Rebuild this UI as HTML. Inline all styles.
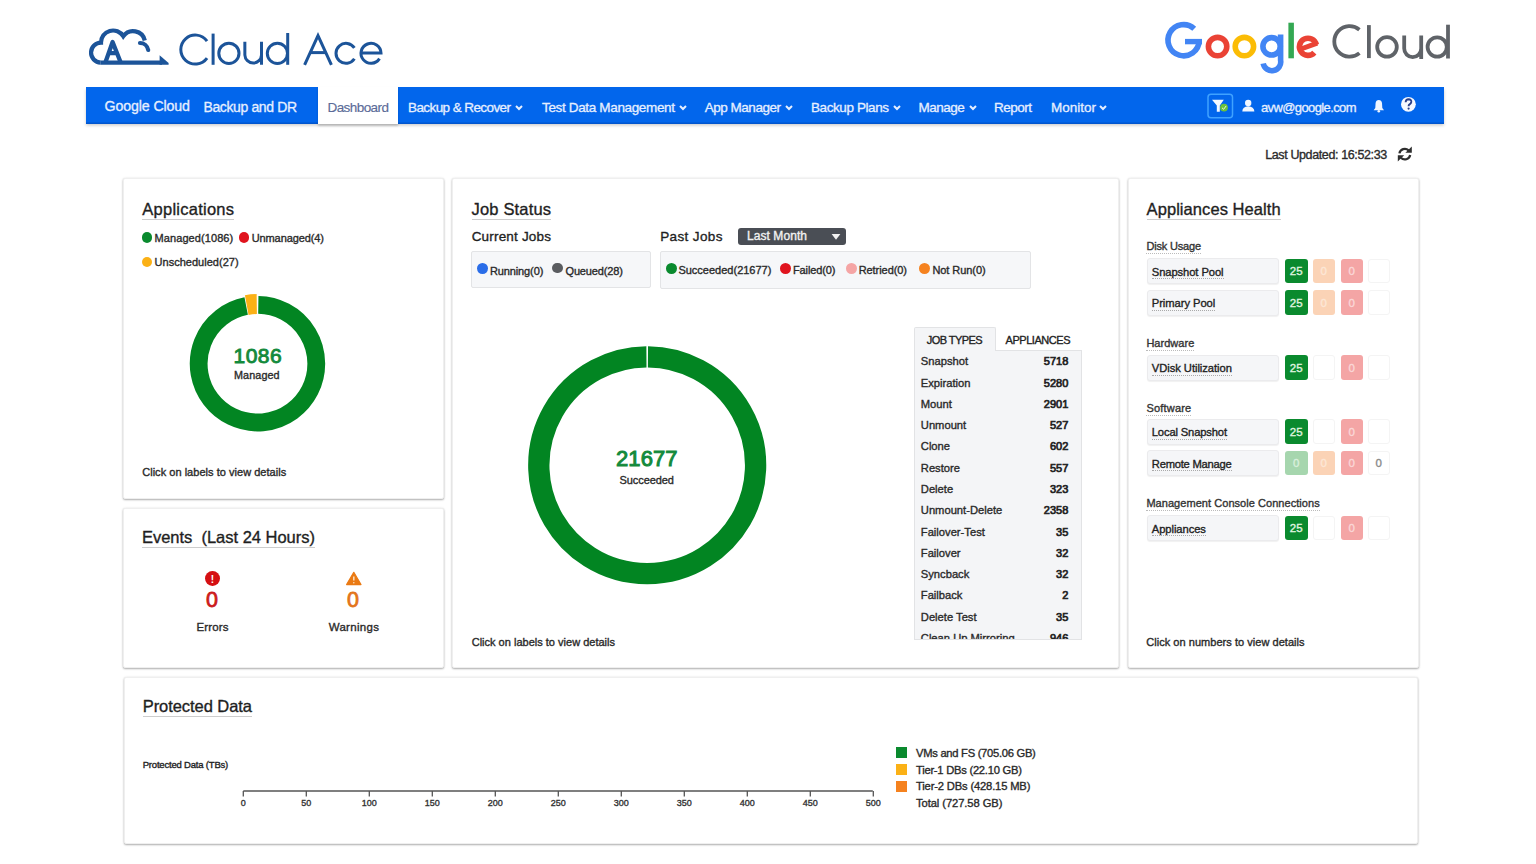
<!DOCTYPE html><html><head><meta charset="utf-8"><style>
html,body{margin:0;padding:0;background:#fff;width:1536px;height:864px;overflow:hidden;position:relative;font-family:"Liberation Sans",sans-serif}
.t{position:absolute;white-space:pre;line-height:1}
.r{position:absolute}
.a{position:absolute}
</style></head><body>
<svg class="a" style="left:0;top:0" width="1536" height="130" viewBox="0 0 1536 130">
<g fill="none" stroke="#1c5499" stroke-width="4.2">
<path d="M100.6 62.6 A10 10 0 0 1 101.00 42.61 A12 12 0 0 1 123.25 36.26 A12 12 0 0 1 144.8 40.5"/>
<path d="M140 43 A8.3 8.3 0 0 1 148.2 50" stroke-linecap="round"/>
<path d="M100.5 62.6 L162 62.6"/>
<path d="M105.2 63 L112.6 42 L120.9 63 M107.8 53.2 L118 53.2" stroke-linejoin="round" stroke-width="4.3"/>
</g>
<path d="M159.6 55.2 L168.6 63 L168.6 64.8 L159.6 64.8 Z" fill="#1c5499"/>
</svg>
<svg class="a" style="left:0;top:0" width="400" height="80"><g fill="none" stroke="#1c5499" stroke-width="3">
<path d="M207.03 41.03 A14.5 14.5 0 1 0 207.03 58.07"/>
<path d="M213.1 33.6 L213.1 64.8"/>
<circle cx="228.9" cy="53.3" r="10.1"/>
<path d="M244.85 41.8 L244.85 55 A8.33 8.33 0 0 0 261.5 55 M261.5 41.8 L261.5 64.8"/>
<circle cx="277.4" cy="53.35" r="10.1"/>
<path d="M287.7 33 L287.7 64.8"/>
<path d="M304.6 64.8 L318 35.6 L331.4 64.8" stroke-linejoin="miter"/>
<path d="M310.8 52.6 L325.2 52.6"/>
<path d="M354.39 47.90 A10 10 0 1 0 354.39 58.80"/>
<path d="M361 53 L381 53 A10 10 0 1 0 379.48 58.65"/>
</g></svg>
<svg class="a" style="left:0;top:0" width="1536" height="90">
<g fill="none" stroke-width="5.6">
<path d="M1194.24 28.79 A15.6 15.6 0 1 0 1199.18 41.02" stroke="#4285f4"/>
<circle cx="1217.6" cy="46.6" r="9.2" stroke="#ea4335"/>
<circle cx="1244.4" cy="46.6" r="9.2" stroke="#fbbc05"/>
<circle cx="1271.6" cy="46.3" r="8.7" stroke="#4285f4"/>
<path d="M1280.6 34.4 L1280.6 60.2 A8.7 8.7 0 0 1 1263.2 63.5" stroke="#4285f4"/>
<path d="M1299.6 49.5 L1317.2 43.2" stroke="#ea4335" stroke-width="5"/>
<path d="M1316.30 44.73 A8.55 8.55 0 1 0 1314.35 52.52" stroke="#ea4335"/>
</g>
<rect x="1185" y="38.9" width="17" height="5.4" fill="#4285f4"/>
<rect x="1288.4" y="22.7" width="5.5" height="35.6" fill="#34a853"/>
<g fill="none" stroke="#5f6368" stroke-width="3.8">
<path d="M1359.43 29.68 A15.3 15.3 0 1 0 1359.43 53.12"/>
<circle cx="1387" cy="46.9" r="9.8"/>
<path d="M1404.2 35.6 L1404.2 48.6 A8.5 8.5 0 0 0 1421.2 48.6 M1421.2 35.6 L1421.2 59"/>
<circle cx="1437.2" cy="47" r="9.6"/>
<path d="M1448 24.7 L1448 58.5"/>
</g>
<rect x="1367" y="25.1" width="3.8" height="33" fill="#5f6368"/>
</svg>
<div class="r" style="left:86px;top:86.5px;width:1358px;height:37.5px;background:#0266ec;box-shadow:0 1.5px 3px rgba(0,0,0,.2),inset 0 -1.5px 0 rgba(0,40,120,.25)"></div>
<div class="r" style="left:317.5px;top:86.5px;width:80.5px;height:37.5px;background:#fff;box-shadow:0 1.5px 2px rgba(0,0,0,.16)"></div>
<div class="t" style="left:104.60px;top:99px;font-size:14.2px;color:#e6efff;letter-spacing:-0.122px;-webkit-text-stroke:0.3px #e6efff;">Google Cloud</div>
<div class="t" style="left:203.50px;top:100px;font-size:14px;color:#e6efff;letter-spacing:-0.380px;-webkit-text-stroke:0.3px #e6efff;">Backup and DR</div>
<div class="t" style="left:327.50px;top:101px;font-size:13.5px;color:#5b6b98;letter-spacing:-0.568px;-webkit-text-stroke:0.15px #5b6b98;">Dashboard</div>
<div class="t" style="left:408.00px;top:101px;font-size:13.5px;color:#e6efff;letter-spacing:-0.587px;-webkit-text-stroke:0.3px #e6efff;">Backup &amp; Recover</div>
<div class="t" style="left:542.00px;top:101px;font-size:13.5px;color:#e6efff;letter-spacing:-0.346px;-webkit-text-stroke:0.3px #e6efff;">Test Data Management</div>
<div class="t" style="left:704.70px;top:101px;font-size:13.5px;color:#e6efff;letter-spacing:-0.475px;-webkit-text-stroke:0.3px #e6efff;">App Manager</div>
<div class="t" style="left:811.00px;top:101px;font-size:13.5px;color:#e6efff;letter-spacing:-0.414px;-webkit-text-stroke:0.3px #e6efff;">Backup Plans</div>
<div class="t" style="left:918.60px;top:101px;font-size:13.5px;color:#e6efff;letter-spacing:-0.537px;-webkit-text-stroke:0.3px #e6efff;">Manage</div>
<div class="t" style="left:994.00px;top:101px;font-size:13.5px;color:#e6efff;letter-spacing:-0.504px;-webkit-text-stroke:0.3px #e6efff;">Report</div>
<div class="t" style="left:1051.00px;top:101px;font-size:13.5px;color:#e6efff;letter-spacing:-0.003px;-webkit-text-stroke:0.3px #e6efff;">Monitor</div>
<svg class="a" style="left:0;top:0" width="1536" height="130"><g fill="none" stroke="#e6efff" stroke-width="2"><path d="M516 106 L519 109 L522 106"/><path d="M680 106 L683 109 L686 106"/><path d="M786 106 L789 109 L792 106"/><path d="M894 106 L897 109 L900 106"/><path d="M970 106 L973 109 L976 106"/><path d="M1100 106 L1103 109 L1106 106"/></g></svg>
<svg class="a" style="left:0;top:0" width="1536" height="130">
<rect x="1208" y="94.3" width="24.5" height="23.5" rx="3" fill="none" stroke="#3fa2ff" stroke-width="1.5"/>
<path d="M1212 99.8 L1223.8 99.8 L1219.8 105.5 L1219.8 111.8 L1216.8 111.8 L1216.8 105.5 Z" fill="#f4f8ff"/>
<circle cx="1224" cy="107.6" r="3.9" fill="#6cc23a"/><path d="M1222 107.8 L1223.6 109.3 L1226.2 105.9" fill="none" stroke="#e8f8e0" stroke-width="1"/>
<circle cx="1248.2" cy="103" r="3.2" fill="#f0f6ff"/>
<path d="M1242.3 111.6 Q1242.5 106.5 1248.2 106.3 Q1254 106.5 1254.4 111.6 Z" fill="#f0f6ff"/>
<path d="M1373.6 110.3 L1384 110.3 L1382.3 108 L1382 103 Q1381.5 99.9 1378.8 99.9 Q1376 99.9 1375.6 103 L1375.3 108 Z" fill="#f0f6ff"/>
<circle cx="1378.8" cy="111.3" r="1.3" fill="#f0f6ff"/>
<circle cx="1408.4" cy="104.3" r="7.4" fill="#f5f9ff"/>
<path d="M1405.6 102.3 Q1405.8 99.3 1408.6 99.3 Q1411.4 99.4 1411.3 101.9 Q1411.2 103.4 1409.6 104.3 Q1408.6 104.9 1408.6 106.2" fill="none" stroke="#2a3f8a" stroke-width="1.9"/>
<circle cx="1408.6" cy="108.6" r="1.1" fill="#2a3f8a"/>
</svg>
<div class="t" style="left:1261.00px;top:101px;font-size:13px;color:#e6efff;letter-spacing:-0.617px;-webkit-text-stroke:0.3px #e6efff;">avw@google.com</div>
<div class="t" style="left:1265.20px;top:149px;font-size:12.5px;color:#2b2b2b;letter-spacing:-0.379px;-webkit-text-stroke:0.35px #2b2b2b;">Last Updated: 16:52:33</div>
<svg class="a" style="left:1390px;top:140px" width="30" height="30" viewBox="1390 140 30 30">
<g fill="none" stroke="#2e2e2e" stroke-width="2.2">
<path d="M1399.4 153.4 A5.5 5.5 0 0 1 1408.6 150.4"/><path d="M1410.2 155 A5.5 5.5 0 0 1 1400.9 157.8"/>
</g>
<path d="M1405.4 152.8 L1411.8 152.8 L1411.8 146.4 Z" fill="#2e2e2e"/>
<path d="M1404.2 155.3 L1397.8 155.3 L1397.8 161.6 Z" fill="#2e2e2e"/>
</svg>
<div class="r" style="left:122.5px;top:178px;width:321.5px;height:320.5px;background:#fff;border:1px solid #efefef;box-sizing:border-box;box-shadow:0 0 3px rgba(0,0,0,.07),0 1px 2px rgba(0,0,0,.3);border-radius:2px"></div>
<div class="r" style="left:123px;top:507.5px;width:320.5px;height:160.0px;background:#fff;border:1px solid #efefef;box-sizing:border-box;box-shadow:0 0 3px rgba(0,0,0,.07),0 1px 2px rgba(0,0,0,.3);border-radius:2px"></div>
<div class="r" style="left:452px;top:178px;width:666.5px;height:489.5px;background:#fff;border:1px solid #efefef;box-sizing:border-box;box-shadow:0 0 3px rgba(0,0,0,.07),0 1px 2px rgba(0,0,0,.3);border-radius:2px"></div>
<div class="r" style="left:1128px;top:178px;width:290.5px;height:489.5px;background:#fff;border:1px solid #efefef;box-sizing:border-box;box-shadow:0 0 3px rgba(0,0,0,.07),0 1px 2px rgba(0,0,0,.3);border-radius:2px"></div>
<div class="r" style="left:124px;top:677px;width:1294px;height:167px;background:#fff;border:1px solid #efefef;box-sizing:border-box;box-shadow:0 0 3px rgba(0,0,0,.07),0 1px 2px rgba(0,0,0,.3);border-radius:2px"></div>
<div class="t" style="left:142.30px;top:201px;font-size:16.5px;color:#1f1f1f;letter-spacing:0.248px;-webkit-text-stroke:0.35px #1f1f1f;">Applications</div>
<div class="r" style="left:142.3px;top:219px;width:91.69999999999999px;height:1px;background:#cdcdcd"></div>
<div class="r" style="left:142.10000000000002px;top:232.20000000000002px;width:10.4px;height:10.4px;border-radius:50%;background:#0a8a2e"></div>
<div class="t" style="left:154.60px;top:233px;font-size:11px;color:#2a2a2a;letter-spacing:0.078px;-webkit-text-stroke:0.35px #2a2a2a;">Managed(1086)</div>
<div class="r" style="left:238.60000000000002px;top:232.4px;width:10.4px;height:10.4px;border-radius:50%;background:#e0141e"></div>
<div class="t" style="left:251.70px;top:233px;font-size:11px;color:#2a2a2a;letter-spacing:-0.098px;-webkit-text-stroke:0.35px #2a2a2a;">Unmanaged(4)</div>
<div class="r" style="left:141.9px;top:256.8px;width:10.4px;height:10.4px;border-radius:50%;background:#fbb116"></div>
<div class="t" style="left:154.60px;top:257px;font-size:11px;color:#2a2a2a;letter-spacing:0.016px;-webkit-text-stroke:0.35px #2a2a2a;">Unscheduled(27)</div>
<svg class="a" style="left:0;top:0" width="1536" height="864"><path d="M258.32 304.91 A58.8 58.8 0 1 1 246.18 306.00" fill="none" stroke="#028522" stroke-width="17.8"/><path d="M246.74 305.08 A59.6 59.6 0 0 1 256.77 304.10" fill="none" stroke="#fbb116" stroke-width="20"/></svg>
<div class="t" style="left:233.60px;top:345px;font-size:21px;color:#138a3c;letter-spacing:0.428px;-webkit-text-stroke:0.9px #138a3c;">1086</div>
<div class="t" style="left:234.00px;top:370px;font-size:10.8px;color:#2a2a2a;letter-spacing:0.094px;-webkit-text-stroke:0.35px #2a2a2a;">Managed</div>
<div class="t" style="left:142.20px;top:467px;font-size:11px;color:#2a2a2a;letter-spacing:0.031px;-webkit-text-stroke:0.35px #2a2a2a;">Click on labels to view details</div>
<div class="t" style="left:141.90px;top:529px;font-size:16.5px;color:#1f1f1f;letter-spacing:-0.010px;-webkit-text-stroke:0.35px #1f1f1f;">Events  (Last 24 Hours)</div>
<div class="r" style="left:141.9px;top:547px;width:173.1px;height:1px;background:#cdcdcd"></div>
<div class="r" style="left:205.1px;top:571.2px;width:14.8px;height:14.8px;border-radius:50%;background:#d50f12"></div>
<div class="t" style="left:210.83px;top:575px;font-size:10px;color:#fff;font-weight:bold;">!</div>
<div class="t" style="left:205.92px;top:590px;font-size:21.5px;color:#cc1a1a;-webkit-text-stroke:0.8px #cc1a1a;">0</div>
<div class="t" style="left:196.50px;top:622px;font-size:11.5px;color:#2a2a2a;letter-spacing:0.139px;-webkit-text-stroke:0.35px #2a2a2a;">Errors</div>
<svg class="a" style="left:0;top:0" width="1536" height="864"><path d="M353.8 572.3 L361 584.6 L346.6 584.6 Z" fill="#ea7a14" stroke="#ea7a14" stroke-width="1.2" stroke-linejoin="round"/><path d="M353.8 576.5 L353.8 580.6" stroke="#fbe0c0" stroke-width="1.5"/><circle cx="353.8" cy="582.7" r="0.8" fill="#fbe0c0"/></svg>
<div class="t" style="left:347.12px;top:590px;font-size:21.5px;color:#e3741a;-webkit-text-stroke:0.8px #e3741a;">0</div>
<div class="t" style="left:328.70px;top:622px;font-size:11.5px;color:#2a2a2a;letter-spacing:0.294px;-webkit-text-stroke:0.35px #2a2a2a;">Warnings</div>
<div class="t" style="left:471.50px;top:201px;font-size:16.5px;color:#1f1f1f;letter-spacing:0.182px;-webkit-text-stroke:0.35px #1f1f1f;">Job Status</div>
<div class="r" style="left:471.5px;top:219px;width:79.60000000000002px;height:1px;background:#cdcdcd"></div>
<div class="t" style="left:471.70px;top:230px;font-size:13.5px;color:#1f1f1f;letter-spacing:0.183px;-webkit-text-stroke:0.35px #1f1f1f;">Current Jobs</div>
<div class="t" style="left:660.20px;top:230px;font-size:13.5px;color:#1f1f1f;letter-spacing:0.365px;-webkit-text-stroke:0.35px #1f1f1f;">Past Jobs</div>
<div class="r" style="left:737.6px;top:227.6px;width:108.39999999999998px;height:17.80000000000001px;background:#4a4e55;border-radius:3px"></div>
<div class="t" style="left:747.00px;top:230px;font-size:12px;color:#f2f2f2;letter-spacing:0.070px;-webkit-text-stroke:0.35px #f2f2f2;">Last Month</div>
<svg class="a" style="left:0;top:0" width="1536" height="864"><path d="M831.6 234 L840.4 234 L836 239.8 Z" fill="#f2f2f2"/></svg>
<div class="r" style="left:471px;top:251.2px;width:180.39999999999998px;height:37.19999999999999px;background:#f6f7f9;border:1px solid #e3e4e6;box-sizing:border-box;border-radius:2px"></div>
<div class="r" style="left:660.2px;top:251px;width:370.79999999999995px;height:37.60000000000002px;background:#f6f7f9;border:1px solid #e3e4e6;box-sizing:border-box;border-radius:2px"></div>
<div class="r" style="left:476.8px;top:262.8px;width:10.8px;height:10.8px;border-radius:50%;background:#2a6de8"></div>
<div class="t" style="left:490.00px;top:266px;font-size:11px;color:#2a2a2a;letter-spacing:-0.124px;-webkit-text-stroke:0.35px #2a2a2a;">Running(0)</div>
<div class="r" style="left:551.9px;top:262.6px;width:10.8px;height:10.8px;border-radius:50%;background:#5a5c60"></div>
<div class="t" style="left:565.50px;top:266px;font-size:11px;color:#2a2a2a;letter-spacing:-0.156px;-webkit-text-stroke:0.35px #2a2a2a;">Queued(28)</div>
<div class="r" style="left:665.7px;top:262.7px;width:11.0px;height:11.0px;border-radius:50%;background:#0a8a2e"></div>
<div class="t" style="left:678.40px;top:265px;font-size:11px;color:#2a2a2a;letter-spacing:0.003px;-webkit-text-stroke:0.35px #2a2a2a;">Succeeded(21677)</div>
<div class="r" style="left:780.0px;top:262.7px;width:11.0px;height:11.0px;border-radius:50%;background:#e0141e"></div>
<div class="t" style="left:793.00px;top:265px;font-size:11px;color:#2a2a2a;letter-spacing:-0.126px;-webkit-text-stroke:0.35px #2a2a2a;">Failed(0)</div>
<div class="r" style="left:846.0px;top:262.7px;width:11.0px;height:11.0px;border-radius:50%;background:#f5a5a5"></div>
<div class="t" style="left:858.70px;top:265px;font-size:11px;color:#2a2a2a;letter-spacing:-0.067px;-webkit-text-stroke:0.35px #2a2a2a;">Retried(0)</div>
<div class="r" style="left:918.7px;top:262.7px;width:11.0px;height:11.0px;border-radius:50%;background:#f5821f"></div>
<div class="t" style="left:932.40px;top:265px;font-size:11px;color:#2a2a2a;letter-spacing:-0.055px;-webkit-text-stroke:0.35px #2a2a2a;">Not Run(0)</div>
<svg class="a" style="left:0;top:0" width="1536" height="864"><path d="M647.96 356.80 A108.4 108.4 0 1 1 646.44 356.80" fill="none" stroke="#028522" stroke-width="21.3"/></svg>
<div class="t" style="left:616.05px;top:448px;font-size:22px;color:#138a3c;letter-spacing:0.081px;-webkit-text-stroke:1.0px #138a3c;">21677</div>
<div class="t" style="left:619.60px;top:475px;font-size:11px;color:#2a2a2a;letter-spacing:-0.105px;-webkit-text-stroke:0.35px #2a2a2a;">Succeeded</div>
<div class="t" style="left:471.70px;top:637px;font-size:11px;color:#2a2a2a;letter-spacing:0.008px;-webkit-text-stroke:0.35px #2a2a2a;">Click on labels to view details</div>
<div class="r" style="left:913.7px;top:350.8px;width:168.5999999999999px;height:289.2px;background:#f4f5f7;border:1px solid #e2e3e5;border-top:none;box-sizing:border-box"></div>
<div class="r" style="left:913.7px;top:327.4px;width:82.69999999999993px;height:24.100000000000023px;background:#f4f5f7;border:1px solid #e2e3e5;border-bottom:none;box-sizing:border-box;border-radius:2px 2px 0 0"></div>
<div class="r" style="left:996.4px;top:350.3px;width:85.89999999999998px;height:1.0px;background:#e2e3e5"></div>
<div class="t" style="left:926.70px;top:335px;font-size:11px;color:#222;letter-spacing:-0.540px;-webkit-text-stroke:0.35px #222;">JOB TYPES</div>
<div class="t" style="left:1005.50px;top:335px;font-size:11px;color:#222;letter-spacing:-0.443px;-webkit-text-stroke:0.35px #222;">APPLIANCES</div>
<div class="a" style="left:914px;top:351px;width:167px;height:288px;overflow:hidden">
<div class="t" style="left:6.80px;top:5px;font-size:11.2px;color:#2a2a2a;-webkit-text-stroke:0.35px #2a2a2a;">Snapshot</div>
<div class="t" style="left:129.83px;top:5px;font-size:11px;color:#222;-webkit-text-stroke:0.7px #222;">5718</div>
<div class="t" style="left:6.80px;top:27px;font-size:11.2px;color:#2a2a2a;-webkit-text-stroke:0.35px #2a2a2a;">Expiration</div>
<div class="t" style="left:129.83px;top:27px;font-size:11px;color:#222;-webkit-text-stroke:0.7px #222;">5280</div>
<div class="t" style="left:6.80px;top:48px;font-size:11.2px;color:#2a2a2a;-webkit-text-stroke:0.35px #2a2a2a;">Mount</div>
<div class="t" style="left:129.83px;top:48px;font-size:11px;color:#222;-webkit-text-stroke:0.7px #222;">2901</div>
<div class="t" style="left:6.80px;top:69px;font-size:11.2px;color:#2a2a2a;-webkit-text-stroke:0.35px #2a2a2a;">Unmount</div>
<div class="t" style="left:135.95px;top:69px;font-size:11px;color:#222;-webkit-text-stroke:0.7px #222;">527</div>
<div class="t" style="left:6.80px;top:90px;font-size:11.2px;color:#2a2a2a;-webkit-text-stroke:0.35px #2a2a2a;">Clone</div>
<div class="t" style="left:135.95px;top:90px;font-size:11px;color:#222;-webkit-text-stroke:0.7px #222;">602</div>
<div class="t" style="left:6.80px;top:112px;font-size:11.2px;color:#2a2a2a;-webkit-text-stroke:0.35px #2a2a2a;">Restore</div>
<div class="t" style="left:135.95px;top:112px;font-size:11px;color:#222;-webkit-text-stroke:0.7px #222;">557</div>
<div class="t" style="left:6.80px;top:133px;font-size:11.2px;color:#2a2a2a;-webkit-text-stroke:0.35px #2a2a2a;">Delete</div>
<div class="t" style="left:135.95px;top:133px;font-size:11px;color:#222;-webkit-text-stroke:0.7px #222;">323</div>
<div class="t" style="left:6.80px;top:154px;font-size:11.2px;color:#2a2a2a;-webkit-text-stroke:0.35px #2a2a2a;">Unmount-Delete</div>
<div class="t" style="left:129.83px;top:154px;font-size:11px;color:#222;-webkit-text-stroke:0.7px #222;">2358</div>
<div class="t" style="left:6.80px;top:176px;font-size:11.2px;color:#2a2a2a;-webkit-text-stroke:0.35px #2a2a2a;">Failover-Test</div>
<div class="t" style="left:142.06px;top:176px;font-size:11px;color:#222;-webkit-text-stroke:0.7px #222;">35</div>
<div class="t" style="left:6.80px;top:197px;font-size:11.2px;color:#2a2a2a;-webkit-text-stroke:0.35px #2a2a2a;">Failover</div>
<div class="t" style="left:142.06px;top:197px;font-size:11px;color:#222;-webkit-text-stroke:0.7px #222;">32</div>
<div class="t" style="left:6.80px;top:218px;font-size:11.2px;color:#2a2a2a;-webkit-text-stroke:0.35px #2a2a2a;">Syncback</div>
<div class="t" style="left:142.06px;top:218px;font-size:11px;color:#222;-webkit-text-stroke:0.7px #222;">32</div>
<div class="t" style="left:6.80px;top:239px;font-size:11.2px;color:#2a2a2a;-webkit-text-stroke:0.35px #2a2a2a;">Failback</div>
<div class="t" style="left:148.18px;top:239px;font-size:11px;color:#222;-webkit-text-stroke:0.7px #222;">2</div>
<div class="t" style="left:6.80px;top:261px;font-size:11.2px;color:#2a2a2a;-webkit-text-stroke:0.35px #2a2a2a;">Delete Test</div>
<div class="t" style="left:142.06px;top:261px;font-size:11px;color:#222;-webkit-text-stroke:0.7px #222;">35</div>
<div class="t" style="left:6.80px;top:282px;font-size:11.2px;color:#2a2a2a;-webkit-text-stroke:0.35px #2a2a2a;">Clean Up Mirroring</div>
<div class="t" style="left:135.95px;top:282px;font-size:11px;color:#222;-webkit-text-stroke:0.7px #222;">946</div>
</div>
<div class="t" style="left:1146.60px;top:201px;font-size:16.5px;color:#1f1f1f;letter-spacing:0.063px;-webkit-text-stroke:0.35px #1f1f1f;">Appliances Health</div>
<div class="r" style="left:1146.6px;top:219px;width:134.0px;height:1px;background:#cdcdcd"></div>
<div class="t" style="left:1146.40px;top:241px;font-size:11px;color:#333;letter-spacing:-0.182px;-webkit-text-stroke:0.35px #333;">Disk Usage</div>
<div class="r" style="left:1146.4px;top:253.2px;width:54.59999999999991px;height:0;border-top:1px dotted #bbb"></div>
<div class="r" style="left:1146.6px;top:258.3px;width:132.60000000000014px;height:26.0px;background:#f5f6f8;border:1px solid #ebebed;box-sizing:border-box;border-radius:3px;box-shadow:0 1px 1px rgba(0,0,0,.06)"></div>
<div class="t" style="left:1151.80px;top:267px;font-size:11.2px;color:#222;letter-spacing:-0.088px;-webkit-text-stroke:0.35px #222;">Snapshot Pool</div>
<div class="r" style="left:1151.8px;top:278.3px;width:71.8px;height:0;border-top:1px dotted #aaa"></div>
<div class="r" style="left:1285px;top:258.8px;width:22.5px;height:24.5px;background:#0a8a2e;border-radius:3px;"></div>
<div class="t" style="left:1289.85px;top:266px;font-size:11.5px;color:#e0f5e0;-webkit-text-stroke:0.35px #e0f5e0;">25</div>
<div class="r" style="left:1312.5px;top:258.8px;width:22.5px;height:24.5px;background:#fbd3b6;border-radius:3px;"></div>
<div class="t" style="left:1320.55px;top:266px;font-size:11.5px;color:#fde7d6;-webkit-text-stroke:0.35px #fde7d6;">0</div>
<div class="r" style="left:1340.5px;top:258.8px;width:22.5px;height:24.5px;background:#f4a5a5;border-radius:3px;"></div>
<div class="t" style="left:1348.55px;top:266px;font-size:11.5px;color:#fbd7d7;-webkit-text-stroke:0.35px #fbd7d7;">0</div>
<div class="r" style="left:1367.5px;top:258.8px;width:22.5px;height:24.5px;background:#fff;border-radius:3px;border:1px solid #f4f4f4;box-sizing:border-box;"></div>
<div class="r" style="left:1146.6px;top:289.8px;width:132.60000000000014px;height:26.0px;background:#f5f6f8;border:1px solid #ebebed;box-sizing:border-box;border-radius:3px;box-shadow:0 1px 1px rgba(0,0,0,.06)"></div>
<div class="t" style="left:1151.80px;top:298px;font-size:11.2px;color:#222;letter-spacing:-0.055px;-webkit-text-stroke:0.35px #222;">Primary Pool</div>
<div class="r" style="left:1151.8px;top:309.8px;width:63.5px;height:0;border-top:1px dotted #aaa"></div>
<div class="r" style="left:1285px;top:290.3px;width:22.5px;height:24.5px;background:#0a8a2e;border-radius:3px;"></div>
<div class="t" style="left:1289.85px;top:298px;font-size:11.5px;color:#e0f5e0;-webkit-text-stroke:0.35px #e0f5e0;">25</div>
<div class="r" style="left:1312.5px;top:290.3px;width:22.5px;height:24.5px;background:#fbd3b6;border-radius:3px;"></div>
<div class="t" style="left:1320.55px;top:298px;font-size:11.5px;color:#fde7d6;-webkit-text-stroke:0.35px #fde7d6;">0</div>
<div class="r" style="left:1340.5px;top:290.3px;width:22.5px;height:24.5px;background:#f4a5a5;border-radius:3px;"></div>
<div class="t" style="left:1348.55px;top:298px;font-size:11.5px;color:#fbd7d7;-webkit-text-stroke:0.35px #fbd7d7;">0</div>
<div class="r" style="left:1367.5px;top:290.3px;width:22.5px;height:24.5px;background:#fff;border-radius:3px;border:1px solid #f4f4f4;box-sizing:border-box;"></div>
<div class="t" style="left:1146.40px;top:338px;font-size:11px;color:#333;letter-spacing:0.031px;-webkit-text-stroke:0.35px #333;">Hardware</div>
<div class="r" style="left:1146.4px;top:350px;width:47.899999999999864px;height:0;border-top:1px dotted #bbb"></div>
<div class="r" style="left:1146.6px;top:354.7px;width:132.60000000000014px;height:26.0px;background:#f5f6f8;border:1px solid #ebebed;box-sizing:border-box;border-radius:3px;box-shadow:0 1px 1px rgba(0,0,0,.06)"></div>
<div class="t" style="left:1151.80px;top:363px;font-size:11.2px;color:#222;letter-spacing:-0.044px;-webkit-text-stroke:0.35px #222;">VDisk Utilization</div>
<div class="r" style="left:1151.8px;top:374.7px;width:80.2px;height:0;border-top:1px dotted #aaa"></div>
<div class="r" style="left:1285px;top:355.2px;width:22.5px;height:24.5px;background:#0a8a2e;border-radius:3px;"></div>
<div class="t" style="left:1289.85px;top:363px;font-size:11.5px;color:#e0f5e0;-webkit-text-stroke:0.35px #e0f5e0;">25</div>
<div class="r" style="left:1312.5px;top:355.2px;width:22.5px;height:24.5px;background:#fff;border-radius:3px;border:1px solid #f4f4f4;box-sizing:border-box;"></div>
<div class="r" style="left:1340.5px;top:355.2px;width:22.5px;height:24.5px;background:#f4a5a5;border-radius:3px;"></div>
<div class="t" style="left:1348.55px;top:363px;font-size:11.5px;color:#fbd7d7;-webkit-text-stroke:0.35px #fbd7d7;">0</div>
<div class="r" style="left:1367.5px;top:355.2px;width:22.5px;height:24.5px;background:#fff;border-radius:3px;border:1px solid #f4f4f4;box-sizing:border-box;"></div>
<div class="t" style="left:1146.40px;top:403px;font-size:11px;color:#333;letter-spacing:0.199px;-webkit-text-stroke:0.35px #333;">Software</div>
<div class="r" style="left:1146.4px;top:414.5px;width:44.799999999999955px;height:0;border-top:1px dotted #bbb"></div>
<div class="r" style="left:1146.6px;top:418.7px;width:132.60000000000014px;height:26.0px;background:#f5f6f8;border:1px solid #ebebed;box-sizing:border-box;border-radius:3px;box-shadow:0 1px 1px rgba(0,0,0,.06)"></div>
<div class="t" style="left:1151.80px;top:427px;font-size:11.2px;color:#222;letter-spacing:-0.147px;-webkit-text-stroke:0.35px #222;">Local Snapshot</div>
<div class="r" style="left:1151.8px;top:438.7px;width:75.3px;height:0;border-top:1px dotted #aaa"></div>
<div class="r" style="left:1285px;top:419.2px;width:22.5px;height:24.5px;background:#0a8a2e;border-radius:3px;"></div>
<div class="t" style="left:1289.85px;top:427px;font-size:11.5px;color:#e0f5e0;-webkit-text-stroke:0.35px #e0f5e0;">25</div>
<div class="r" style="left:1312.5px;top:419.2px;width:22.5px;height:24.5px;background:#fff;border-radius:3px;border:1px solid #f4f4f4;box-sizing:border-box;"></div>
<div class="r" style="left:1340.5px;top:419.2px;width:22.5px;height:24.5px;background:#f4a5a5;border-radius:3px;"></div>
<div class="t" style="left:1348.55px;top:427px;font-size:11.5px;color:#fbd7d7;-webkit-text-stroke:0.35px #fbd7d7;">0</div>
<div class="r" style="left:1367.5px;top:419.2px;width:22.5px;height:24.5px;background:#fff;border-radius:3px;border:1px solid #f4f4f4;box-sizing:border-box;"></div>
<div class="r" style="left:1146.6px;top:450.3px;width:132.60000000000014px;height:26.0px;background:#f5f6f8;border:1px solid #ebebed;box-sizing:border-box;border-radius:3px;box-shadow:0 1px 1px rgba(0,0,0,.06)"></div>
<div class="t" style="left:1151.80px;top:459px;font-size:11.2px;color:#222;letter-spacing:-0.234px;-webkit-text-stroke:0.35px #222;">Remote Manage</div>
<div class="r" style="left:1151.8px;top:470.3px;width:80px;height:0;border-top:1px dotted #aaa"></div>
<div class="r" style="left:1285px;top:450.8px;width:22.5px;height:24.5px;background:#a6d6ae;border-radius:3px;"></div>
<div class="t" style="left:1293.05px;top:458px;font-size:11.5px;color:#d9efdc;-webkit-text-stroke:0.35px #d9efdc;">0</div>
<div class="r" style="left:1312.5px;top:450.8px;width:22.5px;height:24.5px;background:#fbd3b6;border-radius:3px;"></div>
<div class="t" style="left:1320.55px;top:458px;font-size:11.5px;color:#fde7d6;-webkit-text-stroke:0.35px #fde7d6;">0</div>
<div class="r" style="left:1340.5px;top:450.8px;width:22.5px;height:24.5px;background:#f4a5a5;border-radius:3px;"></div>
<div class="t" style="left:1348.55px;top:458px;font-size:11.5px;color:#fbd7d7;-webkit-text-stroke:0.35px #fbd7d7;">0</div>
<div class="r" style="left:1367.5px;top:450.8px;width:22.5px;height:24.5px;background:#fff;border-radius:3px;border:1px solid #f4f4f4;box-sizing:border-box;"></div>
<div class="t" style="left:1375.55px;top:458px;font-size:11.5px;color:#8a8a8a;-webkit-text-stroke:0.35px #8a8a8a;">0</div>
<div class="t" style="left:1146.40px;top:498px;font-size:11px;color:#333;letter-spacing:0.051px;-webkit-text-stroke:0.35px #333;">Management Console Connections</div>
<div class="r" style="left:1146.4px;top:510.4px;width:173.29999999999995px;height:0;border-top:1px dotted #bbb"></div>
<div class="r" style="left:1146.6px;top:515.3px;width:132.60000000000014px;height:26.0px;background:#f5f6f8;border:1px solid #ebebed;box-sizing:border-box;border-radius:3px;box-shadow:0 1px 1px rgba(0,0,0,.06)"></div>
<div class="t" style="left:1151.80px;top:524px;font-size:11.2px;color:#222;letter-spacing:-0.066px;-webkit-text-stroke:0.35px #222;">Appliances</div>
<div class="r" style="left:1151.8px;top:535.3px;width:54.2px;height:0;border-top:1px dotted #aaa"></div>
<div class="r" style="left:1285px;top:515.8px;width:22.5px;height:24.5px;background:#0a8a2e;border-radius:3px;"></div>
<div class="t" style="left:1289.85px;top:523px;font-size:11.5px;color:#e0f5e0;-webkit-text-stroke:0.35px #e0f5e0;">25</div>
<div class="r" style="left:1312.5px;top:515.8px;width:22.5px;height:24.5px;background:#fff;border-radius:3px;border:1px solid #f4f4f4;box-sizing:border-box;"></div>
<div class="r" style="left:1340.5px;top:515.8px;width:22.5px;height:24.5px;background:#f4a5a5;border-radius:3px;"></div>
<div class="t" style="left:1348.55px;top:523px;font-size:11.5px;color:#fbd7d7;-webkit-text-stroke:0.35px #fbd7d7;">0</div>
<div class="r" style="left:1367.5px;top:515.8px;width:22.5px;height:24.5px;background:#fff;border-radius:3px;border:1px solid #f4f4f4;box-sizing:border-box;"></div>
<div class="t" style="left:1146.20px;top:637px;font-size:11px;color:#2a2a2a;letter-spacing:0.041px;-webkit-text-stroke:0.35px #2a2a2a;">Click on numbers to view details</div>
<div class="t" style="left:142.70px;top:698px;font-size:16.5px;color:#1f1f1f;letter-spacing:-0.059px;-webkit-text-stroke:0.35px #1f1f1f;">Protected Data</div>
<div class="r" style="left:142.7px;top:716px;width:109.30000000000001px;height:1px;background:#cdcdcd"></div>
<div class="t" style="left:142.70px;top:760px;font-size:9.5px;color:#222;letter-spacing:-0.191px;-webkit-text-stroke:0.35px #222;">Protected Data (TBs)</div>
<svg class="a" style="left:0;top:0" width="1536" height="864"><g stroke="#555" stroke-width="1.3" fill="none"><path d="M243.3 791 L872.8 791"/><path d="M243.3 791 L243.3 796.5"/><path d="M306.3 791 L306.3 796.5"/><path d="M369.3 791 L369.3 796.5"/><path d="M432.3 791 L432.3 796.5"/><path d="M495.3 791 L495.3 796.5"/><path d="M558.3 791 L558.3 796.5"/><path d="M621.3 791 L621.3 796.5"/><path d="M684.3 791 L684.3 796.5"/><path d="M747.3 791 L747.3 796.5"/><path d="M810.3 791 L810.3 796.5"/><path d="M873.3 791 L873.3 796.5"/></g></svg>
<div class="t" style="left:240.80px;top:799px;font-size:9px;color:#333;-webkit-text-stroke:0.35px #333;">0</div>
<div class="t" style="left:301.29px;top:799px;font-size:9px;color:#333;-webkit-text-stroke:0.35px #333;">50</div>
<div class="t" style="left:361.79px;top:799px;font-size:9px;color:#333;-webkit-text-stroke:0.35px #333;">100</div>
<div class="t" style="left:424.79px;top:799px;font-size:9px;color:#333;-webkit-text-stroke:0.35px #333;">150</div>
<div class="t" style="left:487.79px;top:799px;font-size:9px;color:#333;-webkit-text-stroke:0.35px #333;">200</div>
<div class="t" style="left:550.79px;top:799px;font-size:9px;color:#333;-webkit-text-stroke:0.35px #333;">250</div>
<div class="t" style="left:613.79px;top:799px;font-size:9px;color:#333;-webkit-text-stroke:0.35px #333;">300</div>
<div class="t" style="left:676.79px;top:799px;font-size:9px;color:#333;-webkit-text-stroke:0.35px #333;">350</div>
<div class="t" style="left:739.79px;top:799px;font-size:9px;color:#333;-webkit-text-stroke:0.35px #333;">400</div>
<div class="t" style="left:802.79px;top:799px;font-size:9px;color:#333;-webkit-text-stroke:0.35px #333;">450</div>
<div class="t" style="left:865.79px;top:799px;font-size:9px;color:#333;-webkit-text-stroke:0.35px #333;">500</div>
<div class="r" style="left:895.8px;top:747.3px;width:11.200000000000045px;height:10.700000000000045px;background:#0a8a2e"></div>
<div class="r" style="left:895.8px;top:764.3px;width:11.200000000000045px;height:10.700000000000045px;background:#fbb116"></div>
<div class="r" style="left:895.8px;top:781px;width:11.200000000000045px;height:10.5px;background:#f5821f"></div>
<div class="t" style="left:916.00px;top:748px;font-size:11.2px;color:#2a2a2a;letter-spacing:-0.274px;-webkit-text-stroke:0.35px #2a2a2a;">VMs and FS (705.06 GB)</div>
<div class="t" style="left:916.00px;top:765px;font-size:11.2px;color:#2a2a2a;letter-spacing:-0.250px;-webkit-text-stroke:0.35px #2a2a2a;">Tier-1 DBs (22.10 GB)</div>
<div class="t" style="left:916.00px;top:781px;font-size:11.2px;color:#2a2a2a;letter-spacing:-0.159px;-webkit-text-stroke:0.35px #2a2a2a;">Tier-2 DBs (428.15 MB)</div>
<div class="t" style="left:916.00px;top:798px;font-size:11.2px;color:#2a2a2a;letter-spacing:-0.080px;-webkit-text-stroke:0.35px #2a2a2a;">Total (727.58 GB)</div>
</body></html>
